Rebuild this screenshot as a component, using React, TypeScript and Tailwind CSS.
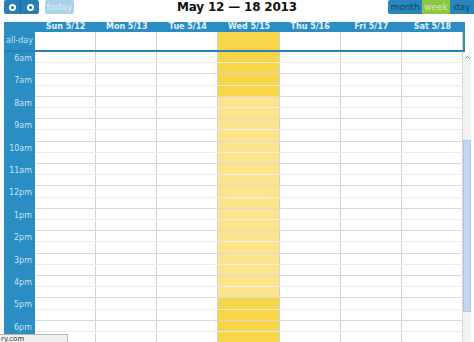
import { ReactNode } from "react"

const days = ["Sun 5/12", "Mon 5/13", "Tue 5/14", "Wed 5/15", "Thu 5/16", "Fri 5/17", "Sat 5/18"]
const hours = ["6am", "7am", "8am", "9am", "10am", "11am", "12pm", "1pm", "2pm", "3pm", "4pm", "5pm", "6pm"]

function Btn({ children, className }: { children: ReactNode; className: string }) {
  return (
    <div className={`h-[14px] flex items-center justify-center text-[9px] leading-none ${className}`}>
      {children}
    </div>
  )
}

function Dot() {
  return (
    <span className="w-[7px] h-[7px] rounded-full bg-white flex items-center justify-center">
      <span className="w-[3px] h-[3px] rounded-full bg-[#1f6f9e]" />
    </span>
  )
}

function wedColor(hour: number) {
  if (hour < 2 || hour > 10) return "bg-[#f8d64a]"
  return "bg-[#fbe48a]"
}

function App() {
  return (
    <div className="w-[474px] h-[342px] overflow-hidden bg-white relative font-['DejaVu_Sans',sans-serif]">
      <div className="grid grid-cols-[1fr_auto_1fr] items-start h-[14px]">
        <div className="flex pl-[4px] gap-[6px]">
          <div className="flex bg-[#2580b5] rounded-[2px]">
            <Btn className="w-[17px] border-r border-[#1d6a97]"><Dot /></Btn>
            <Btn className="w-[18px]"><Dot /></Btn>
          </div>
          <Btn className="w-[29px] bg-[#a9d2e8] text-[#dcedf6] rounded-[2px]">today</Btn>
        </div>
        <div className="text-[12px] font-bold text-[#111] leading-[16px] -mt-[1px] tracking-[-0.2px]">
          May 12 — 18 2013
        </div>
        <div className="flex justify-end">
          <div className="flex bg-[#2786bb] rounded-l-[2px]">
            <Btn className="w-[34px] text-[#0f4563]">month</Btn>
            <Btn className="w-[28px] bg-[#8dc63f] text-[#d7ecc0]">week</Btn>
            <Btn className="w-[24px] text-[#0f4563]">day</Btn>
          </div>
        </div>
      </div>

      <div className="mt-[8px] ml-[4px]">
        <div className="flex w-[461px] h-[10px] bg-[#2a8dc3]">
          <div className="w-[31px]" />
          <div className="grid grid-cols-7 w-[428px]">
            {days.map((d) => (
              <div key={d} className="text-center text-[8px] font-bold leading-[10px] text-[#e3f1f9] whitespace-nowrap">
                {d}
              </div>
            ))}
          </div>
        </div>
        <div className="flex w-[461px] h-[18px] bg-[#2a8dc3]">
          <div className="w-[31px] text-right pr-[2px] text-[8px] leading-[18px] text-[#bfe0f1] whitespace-nowrap">all-day</div>
          <div className="grid grid-cols-7 w-[428px] bg-white">
            {days.map((d, i) => (
              <div key={d} className={`border-r border-[#d4d4d4] ${i === 3 ? "bg-[#f8d64a]" : ""}`} />
            ))}
          </div>
        </div>
        <div className="w-[461px] h-[2px] bg-[#2a80b8]" />

        <div className="flex">
          <div className="w-[31px] bg-[#2a8dc3]">
            {hours.map((h) => (
              <div key={h} className="h-[22.4px] text-right pr-[3px] text-[8px] leading-[13px] text-[#c5e3f3] whitespace-nowrap">
                {h}
              </div>
            ))}
          </div>
          <div className="w-[428px]">
            {hours.map((h, hi) => (
              <div key={h} className="h-[22.4px] flex flex-col">
                {[0, 1].map((half) => (
                  <div
                    key={half}
                    className={`grid grid-cols-7 flex-1 border-b ${half === 0 ? "border-[#ececec]" : "border-[#d9d9d9]"}`}
                  >
                    {days.map((d, di) => (
                      <div key={d} className={`border-r border-[#d2d2d2] ${di === 3 ? wedColor(hi) : ""}`} />
                    ))}
                  </div>
                ))}
              </div>
            ))}
          </div>
          <div className="w-[8px] h-[290px] bg-[#f3f3f3] flex flex-col">
            <div className="h-[10px] flex items-center justify-center">
              <svg width="5" height="3" viewBox="0 0 5 3">
                <path d="M0.5 2.5 L2.5 0.5 L4.5 2.5" fill="none" stroke="#6d84a3" strokeWidth="1" />
              </svg>
            </div>
            <div className="h-[78px]" />
            <div className="h-[172px] bg-[#c4d5f2] border border-[#b3c6ea]" />
          </div>
        </div>
      </div>

      <div className="absolute left-0 bottom-0 w-[68px] h-[8px] bg-[#f0f0f0] border-t border-r border-[#b5b5b5] text-[7px] leading-[8px] text-[#333] pl-[1px]">
        ry.com
      </div>
    </div>
  )
}

export default App
